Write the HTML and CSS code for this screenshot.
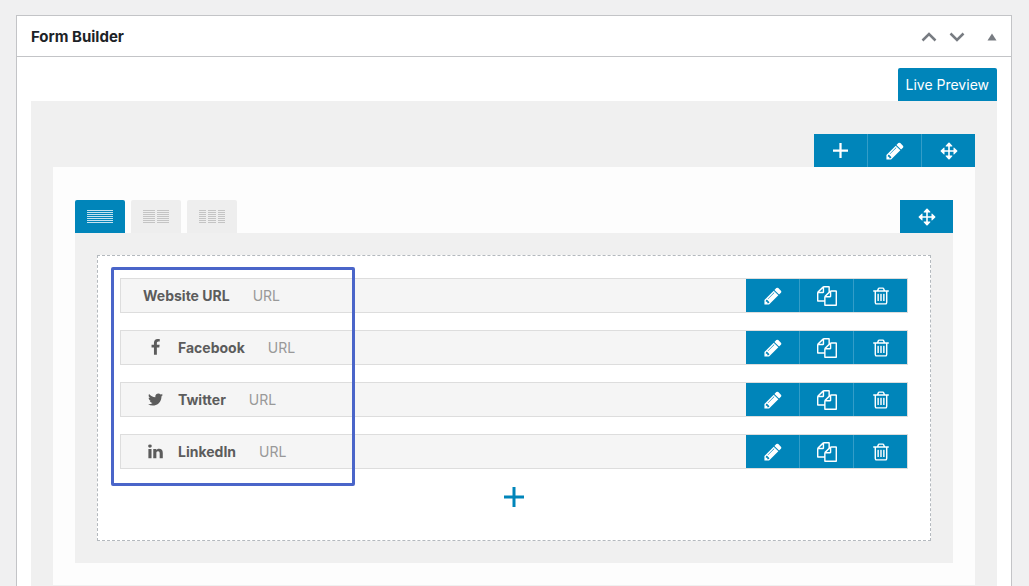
FILE: index.html
```html
<!DOCTYPE html>
<html lang="en">
<head>
<meta charset="utf-8">
<meta name="viewport" content="width=device-width, initial-scale=1">
<title>Form Builder</title>
<link rel="stylesheet" href="styles.css">
</head>
<body>
<svg class="sprite" aria-hidden="true">
  <symbol id="plus" viewBox="0 0 20 20"><path d="M8.500 0h3v8.500H20v3h-8.500V20h-3v-8.500H0v-3h8.500z"/></symbol>
  <symbol id="pencil" viewBox="0 0 1792 1792"><path d="M491 1536l91-91-235-235-91 91v107h128v128h107zm523-928q0-22-22-22-10 0-17 7l-542 542q-7 7-7 17 0 22 22 22 10 0 17-7l542-542q7-7 7-17zm-54-192l416 416-832 832h-416v-416zm683 96q0 53-37 90l-166 166-416-416 166-165q36-38 90-38 53 0 91 38l235 234q37 39 37 91z"/></symbol>
  <symbol id="move" viewBox="0 0 18 18"><path d="M8.200 4.500H6.100q-1 0-.4-.8L8.400.8q.6-.6 1.200 0l2.700 2.900q.6.8-.4.800H9.800v3.700h3.700V6.100q0-1 .8-.4l2.900 2.700q.6.600 0 1.200l-2.900 2.700q-.8.600-.8-.4V9.800H9.800v3.700h2.100q1 0 .4.800l-2.700 2.900q-.6.600-1.200 0l-2.700-2.900q-.6-.8.400-.8h2.100V9.800H4.500v2.100q0 1-.8.400L.8 9.600q-.6-.6 0-1.200l2.900-2.700q.8-.6.8.400v2.100h3.700z"/></symbol>
  <symbol id="copy" viewBox="0 0 1792 1792"><path d="M1696 384q40 0 68 28t28 68v1216q0 40-28 68t-68 28h-960q-40 0-68-28t-28-68v-288h-544q-40 0-68-28t-28-68v-672q0-40 20-88t48-76l408-408q28-28 76-48t88-20h416q40 0 68 28t28 68v328q68-40 128-40h416zm-544 213l-299 299h299v-299zm-640-384l-299 299h299v-299zm196 647l316-316v-416h-384v416q0 40-28 68t-68 28h-416v640h512v-256q0-40 20-88t48-76zm956 804v-1152h-384v416q0 40-28 68t-68 28h-416v640h896z"/></symbol>
  <symbol id="trash" viewBox="0 0 1792 1792"><path d="M704 736v576q0 14-9 23t-23 9h-64q-14 0-23-9t-9-23v-576q0-14 9-23t23-9h64q14 0 23 9t9 23zm256 0v576q0 14-9 23t-23 9h-64q-14 0-23-9t-9-23v-576q0-14 9-23t23-9h64q14 0 23 9t9 23zm256 0v576q0 14-9 23t-23 9h-64q-14 0-23-9t-9-23v-576q0-14 9-23t23-9h64q14 0 23 9t9 23zm128 724v-948h-896v948q0 22 7 40.500t14.500 27 10.500 8.500h832q3 0 10.500-8.500t14.500-27 7-40.500zm-672-1076h448l-48-117q-7-9-17-11h-317q-10 2-17 11zm928 32v64q0 14-9 23t-23 9h-96v948q0 83-47 143.500t-113 60.500h-832q-66 0-113-58.500t-47-141.500v-952h-96q-14 0-23-9t-9-23v-64q0-14 9-23t23-9h309l70-167q15-37 54-63t79-26h320q40 0 79 26t54 63l70 167h309q14 0 23 9t9 23z"/></symbol>
  <symbol id="facebook" viewBox="0 0 1792 1792"><path d="M1343 12v264h-157q-86 0-116 36t-30 108v189h293l-39 296h-254v759h-306v-759h-255v-296h255v-218q0-186 104-288.500t277-102.500q147 0 228 12z"/></symbol>
  <symbol id="twitter" viewBox="0 0 1792 1792"><path d="M1684 408q-67 98-162 167 1 14 1 42 0 130-38 259.500t-115.500 248.500-184.500 210.500-258 146-323 54.500q-271 0-496-145 35 4 78 4 225 0 401-138-105-2-188-64.500t-114-159.500q33 5 61 5 43 0 85-11-112-23-185.500-111.500t-73.500-205.500v-4q68 38 146 41-66-44-105-115t-39-154q0-88 44-163 121 149 294.500 238.500t371.500 99.500q-8-38-8-74 0-134 94.500-228.500t228.500-94.500q140 0 236 102 109-21 205-78-37 115-142 178 93-10 186-50z"/></symbol>
  <symbol id="linkedin" viewBox="0 0 1792 1792"><path d="M477 625v991h-330v-991h330zm21-306q1 73-50.500 122t-135.500 49h-2q-82 0-132-49t-50-122q0-74 51.500-122.500t134.500-48.500 133 48.500 51 122.500zm1166 729v568h-329v-530q0-105-40.500-164.500t-126.500-59.500q-63 0-105.500 34.500t-63.500 85.500q-11 30-11 81v553h-329q2-399 2-647t-1-296l-1-48h329v144h-2q20-32 41-56t56.500-52 87-43.500 114.500-15.500q171 0 275 113.500t104 332.500z"/></symbol>
</svg>
<main class="panel">
  <header class="panel-header">
    <h2 class="panel-title">Form Builder</h2>
    <div class="panel-controls">
      <button class="control" type="button" aria-label="Move up"><svg class="chevron" viewBox="0 0 16 10"><path d="M1.500 8.500 8 2l6.500 6.500"/></svg></button>
      <button class="control" type="button" aria-label="Move down"><svg class="chevron" viewBox="0 0 16 10"><path d="M1.500 1.500 8 8l6.500-6.500"/></svg></button>
      <button class="control control-toggle" type="button" aria-label="Toggle panel"><svg class="triangle" viewBox="0 0 10 8"><path d="M5 0.500 9.500 7.500h-9z"/></svg></button>
    </div>
  </header>
  <div class="panel-body">
    <div class="bar bar-end">
      <button class="preview" type="button">Live Preview</button>
    </div>
    <section class="canvas">
      <div class="bar bar-end">
        <div class="actions">
          <button class="action" type="button" aria-label="Add"><svg class="icon icon-add"><use href="#plus"/></svg></button>
          <button class="action" type="button" aria-label="Edit"><svg class="icon"><use href="#pencil"/></svg></button>
          <button class="action" type="button" aria-label="Move"><svg class="icon icon-move"><use href="#move"/></svg></button>
        </div>
      </div>
      <div class="group">
        <div class="bar">
          <div class="layouts">
            <button class="layout layout-active" type="button" aria-label="One column"><svg class="lines" viewBox="0 0 26 13"><path d="M0 .5h26M0 2.500h26M0 4.500h26M0 6.500h26M0 8.500h26M0 10.500h26M0 12.500h26"/></svg></button>
            <button class="layout" type="button" aria-label="Two columns"><svg class="lines" viewBox="0 0 26 13"><path d="M0 .5h12m2 0h12M0 2.500h12m2 0h12M0 4.500h12m2 0h12M0 6.500h12m2 0h12M0 8.500h12m2 0h12M0 10.500h12m2 0h12M0 12.500h12m2 0h12"/></svg></button>
            <button class="layout" type="button" aria-label="Three columns"><svg class="lines" viewBox="0 0 26 13"><path d="M0 .5h7m2 0h8m2 0h7M0 2.500h7m2 0h8m2 0h7M0 4.500h7m2 0h8m2 0h7M0 6.500h7m2 0h8m2 0h7M0 8.500h7m2 0h8m2 0h7M0 10.500h7m2 0h8m2 0h7M0 12.500h7m2 0h8m2 0h7"/></svg></button>
          </div>
          <div class="actions">
            <button class="action" type="button" aria-label="Move row"><svg class="icon icon-move"><use href="#move"/></svg></button>
          </div>
        </div>
        <div class="row">
          <div class="column">
            <div class="highlight"></div>
            <ul class="fields">
              <li class="field">
                <span class="field-name">Website URL</span><span class="field-type">URL</span>
                <div class="actions">
                  <button class="action" type="button" aria-label="Edit Website URL"><svg class="icon"><use href="#pencil"/></svg></button>
                  <button class="action" type="button" aria-label="Duplicate Website URL"><svg class="icon"><use href="#copy"/></svg></button>
                  <button class="action" type="button" aria-label="Delete Website URL"><svg class="icon"><use href="#trash"/></svg></button>
                </div>
              </li>
              <li class="field">
                <svg class="brand"><use href="#facebook"/></svg><span class="field-name">Facebook</span><span class="field-type">URL</span>
                <div class="actions">
                  <button class="action" type="button" aria-label="Edit Facebook"><svg class="icon"><use href="#pencil"/></svg></button>
                  <button class="action" type="button" aria-label="Duplicate Facebook"><svg class="icon"><use href="#copy"/></svg></button>
                  <button class="action" type="button" aria-label="Delete Facebook"><svg class="icon"><use href="#trash"/></svg></button>
                </div>
              </li>
              <li class="field">
                <svg class="brand"><use href="#twitter"/></svg><span class="field-name">Twitter</span><span class="field-type">URL</span>
                <div class="actions">
                  <button class="action" type="button" aria-label="Edit Twitter"><svg class="icon"><use href="#pencil"/></svg></button>
                  <button class="action" type="button" aria-label="Duplicate Twitter"><svg class="icon"><use href="#copy"/></svg></button>
                  <button class="action" type="button" aria-label="Delete Twitter"><svg class="icon"><use href="#trash"/></svg></button>
                </div>
              </li>
              <li class="field">
                <svg class="brand"><use href="#linkedin"/></svg><span class="field-name">LinkedIn</span><span class="field-type">URL</span>
                <div class="actions">
                  <button class="action" type="button" aria-label="Edit LinkedIn"><svg class="icon"><use href="#pencil"/></svg></button>
                  <button class="action" type="button" aria-label="Duplicate LinkedIn"><svg class="icon"><use href="#copy"/></svg></button>
                  <button class="action" type="button" aria-label="Delete LinkedIn"><svg class="icon"><use href="#trash"/></svg></button>
                </div>
              </li>
            </ul>
            <button class="add-field" type="button" aria-label="Add field"><svg class="icon"><use href="#plus"/></svg></button>
          </div>
        </div>
      </div>
    </section>
  </div>
</main>
</body>
</html>
```

FILE: styles.css
```css
* { box-sizing: border-box; }
html { overflow: hidden; }
body {
  margin: 0;
  padding: 15px 17px 0 16px;
  background: #f0f0f1;
  color: #1d2327;
  font: 14px/20px Inter, "Liberation Sans", sans-serif;
}
button { margin: 0; padding: 0; border: 0; background: none; font: inherit; cursor: pointer; }
svg { display: block; flex: none; }
.sprite { position: absolute; width: 0; height: 0; }

.panel { border: 1px solid #c3c4c7; background: #fff; }
.panel-header {
  display: flex;
  align-items: center;
  justify-content: space-between;
  height: 41px;
  padding: 2px 14px 0;
  border-bottom: 1px solid #c3c4c7;
}
.panel-title { margin: 0; font-size: 15px; line-height: 20px; font-weight: 700; }
.panel-controls { display: flex; align-items: center; gap: 12px; }
.control { display: flex; align-items: center; height: 24px; }
.control-toggle { margin-left: 10px; }
.chevron { width: 16px; height: 10px; fill: none; stroke: #787c82; stroke-width: 2.5; }
.triangle { width: 10px; height: 8px; fill: #787c82; }
.panel-body { padding: 11px 14px 14px; }

.bar { display: flex; align-items: flex-end; justify-content: space-between; }
.bar-end { justify-content: flex-end; }
.preview {
  height: 33px;
  padding: 0 8px;
  border-radius: 2px 2px 0 0;
  background: #0085ba;
  color: #fff;
}
.canvas { padding: 33px 22px 22px; background: #f0f0f0; }
.group { padding: 33px 22px 22px; background: #fdfdfd; }
.row { padding: 22px; background: #f0f0f0; }

.actions { display: flex; background: #0085ba; }
.action {
  display: flex;
  align-items: center;
  justify-content: center;
  width: 54px;
  height: 33px;
  border-right: 1px solid #339dc8;
  color: #fff;
}
.action:last-child { width: 53px; border-right: 0; }
.icon { width: 20px; height: 20px; fill: currentColor; }
.icon-add { width: 15px; height: 15px; }
.icon-move { width: 18px; height: 18px; }

.layouts { display: flex; gap: 6px; }
.layout {
  display: flex;
  align-items: center;
  justify-content: center;
  width: 50px;
  height: 33px;
  border-radius: 2px 2px 0 0;
  background: #eee;
  color: #c4c4c4;
}
.layout-active { background: #0085ba; color: #c5e3f0; }
.lines { width: 26px; height: 13px; stroke: currentColor; stroke-width: 1; }

.column {
  position: relative;
  padding: 22px 22px 33px;
  border: 1px dashed #b4b9be;
  background: #fff;
}
.highlight {
  position: absolute;
  top: 11px;
  left: 13px;
  width: 244px;
  height: 219px;
  border: 3px solid #4a65c9;
  border-radius: 2px;
  pointer-events: none;
}
.fields { display: grid; gap: 17px; margin: 0; padding: 0; list-style: none; }
.field {
  display: flex;
  align-items: center;
  border: 1px solid #ddd;
  background: #f5f5f5;
  padding-left: 22px;
}
.field .actions { margin-left: auto; }
.brand { width: 17px; height: 17px; margin: 0 14px 0 4px; fill: #5c5c5c; }
.field-name { color: #5c5c5c; font-weight: 700; }
.field-type { margin-left: 23px; color: #999; }
.add-field { display: flex; margin: 18px auto 0; color: #0085ba; }
```
